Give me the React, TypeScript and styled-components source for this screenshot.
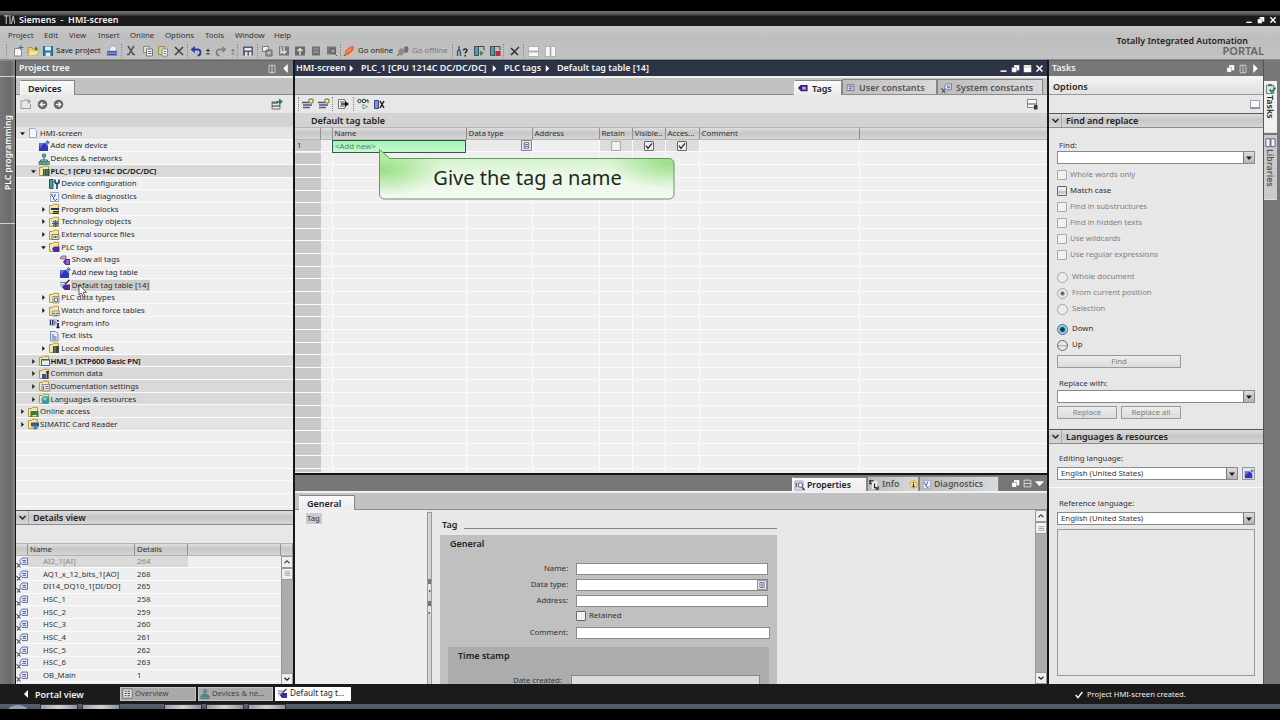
import React from "react";
import styled, { createGlobalStyle, css } from "styled-components";

const Global = createGlobalStyle`
  * { box-sizing: border-box; }
  body { margin: 0; background: #000; overflow: hidden; }
`;

const headGrad = "linear-gradient(#dedede, #c6c6c6 45%, #d6d6d6)";

const Screen = styled.div`
  width: 1280px; height: 720px; display: flex; flex-direction: column;
  font-family: "Noto Sans", "Open Sans", sans-serif; font-size: 7.8px; line-height: 1; color: #333;
  white-space: nowrap; background: #000; padding-top: 11px; overflow: hidden;
`;
const TitleBar = styled.div`
  height: 15px; flex: none; display: flex; align-items: center; padding: 2px 3px 0 4px;
  background: linear-gradient(#777 0, #4a4a4a 4px, #1c1c1c 5px, #1a1a1a); color: #f2f2f2;
  font-size: 9px; font-weight: 600; gap: 4px;
`;
const Grow = styled.div`flex: 1; min-width: 0;`;
const TopArea = styled.div`
  height: 34px; flex: none; display: flex; background: linear-gradient(#c9c9c9, #bfbfbf 30%, #c1c1c1);
  border-bottom: 1px solid #8c8c8c;
`;
const TopLeft = styled.div`flex: 1; display: flex; flex-direction: column;`;
const MenuBar = styled.div`height: 17px; display: flex; padding-top: 2px; padding-left: 8px;`;
const MenuItem = styled.div<{ $w: number }>`width: ${p => p.$w}px; height: 16px; display: flex; align-items: center;`;
const ToolRow = styled.div`height: 16px; display: flex; align-items: center; padding-left: 6px;`;
const Slot = styled.div<{ $w: number }>`width: ${p => p.$w}px; flex: none; height: 14px; display: flex; align-items: center; justify-content: center;`;
const SlotText = styled.div<{ $w: number; $dim?: boolean }>`
  width: ${p => p.$w}px; flex: none; padding-left: 1px; color: ${p => (p.$dim ? "#777" : "#222")};
`;
const Sep = styled.i`width: 1px; height: 14px; flex: none; border-left: 1px dotted #8a8a8a;`;
const Brand = styled.div`width: 180px; padding: 10px 16px 0 0; text-align: right; color: #1e1e1e; font-size: 8.9px; font-weight: 600;`;
const BrandLine = styled.div`padding-right: 16px; height: 9px; line-height: 9px;`;
const Portal = styled.div`color: #666; font-size: 11px; line-height: 11px; font-weight: 600;`;

const Body = styled.div`height: 624px; flex: none; display: flex; background: #15161e;`;
const LeftStrip = styled.div`
  width: 15px; display: flex; flex-direction: column; background: linear-gradient(90deg, #777, #6b6b6b 70%, #858585);
  margin-right: 1px;
`;
const StripTop = styled.div`height: 17px; border-bottom: 1px solid #d0d0d0; border-top: 1px solid #888;`;
const StripTab = styled.div`
  height: 147px; border-bottom: 1px solid #d0d0d0; display: flex; align-items: flex-end;
  writing-mode: vertical-rl; color: #fff;
`;
const Rotated = styled.span`transform: rotate(180deg); font-weight: 600; font-size: 8.5px; line-height: 15px; padding-top: 33px; height: 146px; width: 15px;`;

const Column = styled.div<{ $w: number; $mr?: number }>`
  width: ${p => p.$w}px; flex: none; display: flex; flex-direction: column; background: #efefef; position: relative;
  margin-right: ${p => p.$mr ?? 0}px; overflow: hidden;
`;
const PaneTitle = styled.div<{ $dark?: boolean }>`
  height: 16px; flex: none; display: flex; align-items: center; padding: 0 3px 0 ${p => (p.$dark ? 1 : 3)}px; color: #f4f4f4;
  font-size: 8.95px; font-weight: 600; background: ${p => (p.$dark ? "#2e3448" : "#777")}; border-top: 1px solid ${p => (p.$dark ? "#232839" : "#666")};
`;
const PaneIcons = styled.div<{ $gap: number }>`display: flex; align-items: center; gap: ${p => p.$gap}px;`;
const Crumb = styled.span<{ $w: number }>`width: ${p => p.$w}px; display: flex; align-items: center; justify-content: space-between; padding-right: 6px;`;
const TabBar = styled.div<{ $right?: boolean }>`
  height: 19px; flex: none; display: flex; align-items: flex-end; background: #c2c2c2; border-top: 2px solid #f0f0f0;
  border-bottom: 1px solid #8d8d8d; padding: 0 4px; justify-content: ${p => (p.$right ? "flex-end" : "flex-start")};
`;
const Tab = styled.div<{ $w: number; $active?: boolean; $tight?: boolean }>`
  width: ${p => p.$w}px; height: 15px; display: flex; align-items: center; gap: ${p => (p.$tight ? 2 : 4)}px; padding-left: ${p => (p.$tight ? 1 : 3)}px;
  font-size: ${p => (p.$tight ? 8.7 : 9)}px; font-weight: 600; color: ${p => (p.$active ? "#20202a" : "#555")};
  border: 1px solid #858585; border-bottom: 0;
  background: ${p => (p.$active ? "linear-gradient(#fafafa, #ebebeb)" : "linear-gradient(90deg, #bcbcbc, #dadada)")};
  ${p => p.$active && css`margin-bottom: -1px; border-left-color: #f8f8f8;`}
`;
const TabLabel = styled.span`padding-left: 4px;`;
const Toolbar = styled.div`height: 18px; flex: none; background: #e7e7e7; display: flex; align-items: center;`;
const Band = styled.div`height: 14px; flex: none; background: #d3d3d3; display: flex; align-items: center; font-size: 9px; font-weight: 600; color: #1c1c1c; padding-left: 16px;`;

const TreeArea = styled.div`height: 383px; flex: none; overflow: hidden; background: #efefef;`;
const TreeRow = styled.div<{ $tone: number; $depth: number }>`
  height: 12.66px; display: flex; align-items: center; padding: 1px 0 0 ${p => 1 + p.$depth * 10.6}px;
  border-bottom: 1px solid #fafafa; background: ${p => ["#efefef", "#e4e4e4", "#d9d9d9"][p.$tone]};
`;
const Caret = styled.span`width: 10px; height: 9px; padding-left: 1px; display: flex; flex: none; align-items: center; justify-content: center;`;
const TreeIcon = styled.span`width: 12px; height: 12px; flex: none; display: flex;`;
const TreeText = styled.span<{ $bold?: boolean; $sel?: boolean }>`
  height: 11px; line-height: 11px; font-weight: ${p => (p.$bold ? 600 : 400)}; color: ${p => (p.$bold ? "#111" : "#2d2d2d")};
  letter-spacing: ${p => (p.$bold ? "-0.15px" : "0")};
  background: ${p => (p.$sel ? "#ccc" : "transparent")}; padding: 0 1px;
`;
const SectionHead = styled.div`
  height: 15px; flex: none; display: flex; align-items: center; background: ${headGrad};
  border-top: 1px solid #555; border-bottom: 1px solid #8c8c8c; font-size: 9px; font-weight: 600; color: #222;
`;
const SectionToggle = styled.span`width: 13px; height: 13px; display: flex; align-items: center; justify-content: center; border-right: 1px solid #aaa; margin-right: 4px;`;
const Cells = styled.div`display: flex; flex: none;`;
const HeadCell = styled.div<{ $w: number }>`
  width: ${p => p.$w}px; height: 12.66px; flex: none; display: flex; align-items: center; padding: 1px 0 0 2px; overflow: hidden;
  border-right: 1px solid #909090; border-bottom: 1px solid #b5b5b5; border-top: 1px solid #b5b5b5; background: ${headGrad}; color: #333;
`;
const Cell = styled.div<{ $w: number; $bg?: string; $line?: boolean }>`
  width: ${p => p.$w}px; height: 12.66px; flex: none; display: flex; align-items: center; padding-top: 1px;
  background: ${p => p.$bg ?? "#efefef"}; border-bottom: 1px solid #fbfbfb; border-right: ${p => (p.$line ? "1px solid #fcfcfc" : "0")};
`;
const Centered = styled.span`flex: 1; display: flex; justify-content: center;`;
const Pushed = styled.span`flex: 1; display: flex; justify-content: flex-end;`;
const NameEdit = styled.div`
  width: 134px; height: 13px; flex: none; border: 1px solid #2f5a48; background: linear-gradient(#a8f0b4, #c4fbd0);
  display: flex; align-items: center; padding: 1px 0 0 2px; color: #4f8a68;
`;
const DetailsBody = styled.div`display: flex; height: 130px; flex: none;`;
const DetailText = styled.span<{ $pad: number; $dim?: boolean }>`padding-left: ${p => p.$pad}px; color: ${p => (p.$dim ? "#888" : "#333")};`;
const ScrollTrack = styled.div<{ $h: number }>`
  width: 12px; height: ${p => p.$h}px; flex: none; display: flex; flex-direction: column; background: #acacac; border-left: 1px solid #999;
`;
const ScrollBtn = styled.div`
  height: 12px; flex: none; background: #f0f0f0; border: 1px solid #999; border-left: 0; display: flex; align-items: center; justify-content: center;
`;

const TableArea = styled.div`height: 345px; flex: none; overflow: hidden; background: #efefef;`;
const Inspector = styled.div`height: 212px; flex: none; margin-top: 1px; display: flex; flex-direction: column; border-top: 2px solid #14141c;`;
const InspectorHead = styled.div`height: 16px; flex: none; background: #777; display: flex; align-items: flex-end; justify-content: flex-end; padding-right: 3px;`;
const InspectorTools = styled.div`display: flex; align-items: center; height: 15px; gap: 3px; padding-bottom: 1px;`;
const InspectorBody = styled.div`display: flex; height: 175px; background: #e7e7e7;`;
const NavPane = styled.div`width: 132px; background: #efefef; padding: 3px 0 0 11px;`;
const NavItem = styled.span`display: inline-block; background: #c8cbd0; line-height: 11px; padding: 0 2px 0 1px; color: #333;`;
const Splitter = styled.div`width: 5px; margin-top: 2px; background: #d4d4d4; border: 1px solid #999; border-bottom: 0; padding-top: 66px; display: flex; flex-direction: column; gap: 8px;`;
const Grip = styled.div`height: 14px; background: linear-gradient(#777 5px, #e5e5e5 5px); display: flex; align-items: flex-end; justify-content: center;`;
const Form = styled.div`flex: 1; padding: 6px 0 0 8px; height: 175px; overflow: hidden;`;
const FormHead = styled.div`height: 19px; width: 337px; display: flex; align-items: center; font-size: 9px; font-weight: 600; color: #222; padding: 0 0 2px 2px; gap: 7px;`;
const Rule = styled.i`flex: 1; height: 1px; background: #888; margin-top: 8px;`;
const Card = styled.div`width: 337px; height: 160px; background: #c0c0c0; padding-top: 3px;`;
const CardTitle = styled.div<{ $pad: number }>`height: 12px; line-height: 12px; padding-left: ${p => p.$pad}px; font-size: 9px; font-weight: 600; color: #222;`;
const FieldRow = styled.div<{ $mt?: number }>`height: 12px; margin-top: ${p => p.$mt ?? 4}px; display: flex; align-items: center;`;
const FieldLabel = styled.span<{ $w: number }>`width: ${p => p.$w}px; text-align: right; color: #333;`;
const Field = styled.span<{ $w: number; $ml: number; $bg?: string }>`
  width: ${p => p.$w}px; height: 12px; margin-left: ${p => p.$ml}px; background: ${p => p.$bg ?? "#fff"}; border: 1px solid #8a8a8a;
  display: flex; justify-content: flex-end;
`;
const SubCard = styled.div`width: 321px; margin: 8px 0 0 8px; background: #acacac; height: 60px; padding-top: 3px;`;

const OptionsHead = styled.div`
  height: 19px; flex: none; display: flex; align-items: center; padding: 2px 0 0 4px; font-size: 9px; font-weight: 600; color: #222;
  background: linear-gradient(#f4f4f4, #e0e0e0); border-bottom: 1px solid #9a9a9a;
`;
const TasksBody = styled.div`height: 301px; flex: none; background: #e7e7e7; padding: 12px 8px 0;`;
const LangBody = styled.div`flex: 1; background: #e7e7e7; padding: 9px 8px 0;`;
const Label = styled.div<{ $mb: number }>`height: 10px; line-height: 10px; padding-left: 2px; margin-bottom: ${p => p.$mb}px; color: #333;`;
const Combo = styled.div<{ $w?: number }>`
  width: ${p => p.$w ?? 198}px; height: 13px; border: 1px solid #8a8a8a; background: #fff; display: flex; align-items: center; justify-content: space-between;
  padding-left: 3px; color: #333;
`;
const ComboBtn = styled.span`width: 11px; height: 11px; background: linear-gradient(#ddd, #b4b4b4); border-left: 1px solid #777; display: flex; align-items: center; justify-content: center;`;
const Option = styled.div<{ $on?: boolean; $mt?: number; $gap: number }>`
  height: 16px; margin-top: ${p => p.$mt ?? 0}px; display: flex; align-items: center; gap: ${p => p.$gap}px; color: ${p => (p.$on ? "#2c2c2c" : "#808080")};
`;
const Box = styled.i<{ $on?: boolean; $light?: boolean }>`
  width: 10px; height: 10px; flex: none; border: 1px solid ${p => (p.$on || p.$light ? "#666" : "#a8a8a8")}; border-radius: 1px;
  background: ${p => (p.$on ? "linear-gradient(#eee 40%, #bbb 60%, #eee)" : "#f0f0f0")}; display: flex; align-items: center; justify-content: center;
`;
const Radio = styled.i<{ $kind: "dim" | "dimOn" | "on" | "off" }>`
  width: 11px; height: 11px; flex: none; border-radius: 50%;
  border: 1px solid ${p => (p.$kind === "on" ? "#2b6a8c" : p.$kind === "off" ? "#666" : "#a5a5a5")};
  background: ${p => ({
    dim: "#ececec",
    dimOn: "radial-gradient(circle, #6a6a6a 1.6px, #e8e8e8 2.4px)",
    on: "radial-gradient(circle, #123a55 1.8px, #5fb0d6 2.8px, #b6dcee 4px)",
    off: "linear-gradient(#e8e8e8 40%, #b5b5b5 50%, #e8e8e8 70%)",
  }[p.$kind])};
`;
const Row = styled.div<{ $gap: number; $mt: number }>`display: flex; gap: ${p => p.$gap}px; margin-top: ${p => p.$mt}px;`;
const Button = styled.div<{ $w: number }>`
  width: ${p => p.$w}px; height: 13px; border: 1px solid #999; background: linear-gradient(#ececec, #dcdcdc); display: flex; align-items: center; justify-content: center;
  color: #808080;
`;
const IconButton = styled.div`width: 13px; height: 13px; border: 1px solid #999; background: #e3e6ee; display: flex; align-items: center; justify-content: center;`;
const Divider = styled.i`display: block; height: 1px; background: #fbfbfb; margin: 7px -8px 10px;`;
const ListBox = styled.div`width: 198px; height: 147px; border: 1px solid #999; margin-top: 4px;`;

const RightStrip = styled.div`width: 17px; background: #777; padding: 21px 3px 0 0; display: flex; flex-direction: column; gap: 2px; border-left: 1px solid #555;`;
const SideTab = styled.div<{ $h: number; $active?: boolean }>`
  height: ${p => p.$h}px; width: 13px; background: ${p => (p.$active ? "#f0f0f0" : "#cacaca")}; display: flex; flex-direction: column; align-items: center; padding-top: 2px;
  gap: 1px; color: ${p => (p.$active ? "#222" : "#555")}; border-bottom: 1px solid #ddd;
`;
const VText = styled.span`writing-mode: vertical-rl; font-size: 8.9px; line-height: 11px; font-weight: 600;`;

const Footer = styled.div`height: 20px; flex: none; background: #1b1b1b; display: flex; align-items: center; color: #f0f0f0;`;
const PortalView = styled.div`width: 120px; padding-left: 22px; display: flex; align-items: center; gap: 5px; font-size: 9px; font-weight: 600;`;
const Task = styled.div<{ $active?: boolean; $w: number }>`
  width: ${p => p.$w}px; height: 14px; margin: 0 2px 1px 0; display: flex; align-items: center; gap: 2px; padding-left: 1px; font-size: ${p => (p.$active ? 8.2 : 7.7)}px;
  background: ${p => (p.$active ? "#fff" : "#a9a9a9")}; color: ${p => (p.$active ? "#1c1c1c" : "#444")}; border: 1px solid ${p => (p.$active ? "#fff" : "#c4c4c4")};
`;
const Status = styled.div`width: 205px; display: flex; align-items: center; gap: 4px; font-size: 7.6px; padding-top: 1px;`;
const OsBar = styled.div`height: 5px; flex: none; background: linear-gradient(#59616f, #4d5768); display: flex; padding-left: 8px; overflow: hidden;`;
const OsOrb = styled.i`width: 20px; height: 12px; border-radius: 50%; background: #8fa3b8; margin-top: 1px;`;
const OsBtn = styled.i<{ $ml: number }>`width: 38px; height: 6px; margin-left: ${p => p.$ml}px; background: linear-gradient(90deg, #99a0a8, #d2d4d4 50%, #8b929a); border: 1px solid #333;`;

const Callout = styled.div`position: absolute; left: 84px; top: 88px; width: 297px; height: 53px;`;
const CalloutText = styled.span`position: absolute; left: 0; right: 0; top: 20px; text-align: center; font-size: 20px; color: #1c2a1c; line-height: 20px;`;
const Pointer = styled.div`position: absolute; left: 62px; top: 224px;`;

const P = ({ d, f = "none", s = "none", w = 1 }: { d: string; f?: string; s?: string; w?: number }) => (
  <path d={d} fill={f} stroke={s} strokeWidth={w} />
);
const folder = <P d="M1.5 10.5V2.5h3l1-1.2h5v9.2z" f="#f4e8a6" s="#b8963c" />;
const spark = <P d="M9.5 0v5M7 2.5h5M8 1l3 3M11 1L8 4" s="#5b6a9a" w={0.8} />;
const art: Record<string, React.ReactNode> = {
  page: <P d="M2.5 1.5h5l2 2v7h-7z" f="#f7f9ff" s="#98a6c8" />,
  add: <><P d="M1 3h6l3 3v5H1z" f="#3038b8" /><P d="M1 3h5L2 8z" f="#6670dc" />{spark}</>,
  net: <><P d="M6 3v4M2.5 10V7h7v3M6 7v3" s="#2b6b6b" /><P d="M4.500 1h3v3h-3zM1 8.500h3v3H1zM4.600 8.500h3v3h-3zM8.300 8.500h3v3h-3z" f="#6fb0b0" s="#2b5f66" w={0.7} /></>,
  plc: <>{folder}<P d="M5 4h6.500v7H5z" f="#2e5548" /><P d="M6.500 4v7M9 4v7" s="#7fae8e" w={0.7} /></>,
  config: <><P d="M1.500 1.500h3.500v9H1.500z" f="#3f9f9f" s="#1f5a62" /><P d="M9 11V6M7 1.500v3l2 1.500 2-1.500v-3" s="#22406e" w={1.600} /></>,
  diag: <><P d="M2.500 1.500h8v9h-8z" f="#eef1fa" s="#9aa5c4" /><P d="M4 3v2l1.500 1.500L7 5V3M5.500 6.500V8l2 1.500L9 8" s="#3a4a7a" /></>,
  blocks: <>{folder}<P d="M3 5h8v2H3zM5 8h6v3H5z" f="#2a3348" /><P d="M4 9.500h7" s="#c6a13a" w={0.800} /></>,
  tech: <>{folder}<P d="M7.500 4v7M4 7.500h7M5 5l5 5M10 5l-5 5" s="#2d62a8" w={1.200} /></>,
  source: <>{folder}<P d="M4 5.500h7v5H4z" f="#e9e4cc" s="#6a6a5a" w={0.800} /><P d="M6 7v2M7.500 7v2M9 7v2" s="#333" w={0.800} /></>,
  tags: <>{folder}<P d="M4 8l2-2.500h5.500V11H6z" f="#4a2f9c" /></>,
  show: <><P d="M1 4l2-2h4v3H3z" f="#d8a8d0" s="#5b4a8a" w={0.800} /><P d="M4 8l2.500-3H11v6H6.500z" f="#5a2c94" /><P d="M7 7h3M7 9h3" s="#d8c8f0" w={0.800} /></>,
  table: <><P d="M1 2h8v7H1z" f="#dfe3ef" /><P d="M1 3.500h5M1 6h4" s="#7682a8" /><P d="M6 5l4.500-4" s="#222" w={1.300} /><P d="M3 8l2.500-2.500H11V11H5.500z" f="#4b2a94" /></>,
  types: <>{folder}<P d="M5 4.500h6v6.500H5z" f="#eee" s="#777" w={0.800} /><P d="M6.500 6h3v3.500h-3z" s="#555" w={0.800} /></>,
  watch: <>{folder}<P d="M4 6h7.500v5H4z" f="#ddd8c8" s="#888" w={0.700} /><P d="M4.500 8.500h2.500M8 8.500h3M6 10.500h4" s="#555" w={0.800} /></>,
  info: <><P d="M1 2h8v7H1z" f="#b9c1dd" /><P d="M2.500 3v5M4.500 3v5l2.500-2.500L4.500 3" s="#2c3870" /><P d="M10 3v1.500M10 6v5M8.500 10.500h3" s="#111" w={1.600} /></>,
  text: <><P d="M2.500 1.500h5l2.500 2v7.500H2.500z" f="#e9edfa" s="#7d89b4" /><P d="M4 5h2M4 7h4.500M4 9h4.500" s="#49568c" /></>,
  local: <>{folder}<P d="M5 4h6v7H5z" f="#3a4a42" /><P d="M7 4v7" s="#a9b0a0" w={0.700} /></>,
  hmi: <>{folder}<P d="M3.500 4.500h8v6h-8z" f="#e4f0f4" s="#4a6876" w={1} /><P d="M3.500 5h8" s="#3c5a66" w={1} /></>,
  common: <>{folder}<P d="M4 6h4v5H4z" f="#2e4cc0" /><P d="M9.500 3v8M8 4h3" s="#23305c" w={1.700} /></>,
  doc: <>{folder}<P d="M4 4.500h7.500v6.500H4z" f="#e2e2e2" s="#777" w={0.800} /><P d="M5.500 6v4M7.500 6.500h3M7.500 8.500h3" s="#555" w={0.800} /></>,
  globe: <>{folder}<circle cx="7.500" cy="7" r="4" fill="#2f9ac0" /><P d="M5 6c1-2 3-2 4-1L7 8z" f="#8fdcc8" /></>,
  online: <>{folder}<P d="M3.500 5h8v6h-2V9h-4v2h-2z" f="#3d7a44" /></>,
  card: <>{folder}<P d="M4 4.500h8v4H4z" f="#4a5668" /><P d="M6 7h4l-.5 4.500H7z" f="#2f86c4" /></>,
  tagx: <><P d="M4 4.500l2-2.500h5.500v6.500H6L4 6.500z" f="#dfe4f8" s="#6a74b0" w={1} /><P d="M6.500 4.500h3.500M6.500 6.300h3.500" s="#4a549c" w={0.900} /><P d="M.5 7l4 4.500M4.500 7.500l-3.500 4" s="#444" w={1.100} /></>,
  tag: <><P d="M0 6l3-3.500h8.500V10H3.500z" f="#3c1c80" /><P d="M5 4.500h4.500v3.500H5z" f="#b9a3e6" /></>,
  user: <><P d="M1.500 2.500h9v7.500h-9z" f="#cfd3e6" s="#5a608a" /><P d="M4 5h4.500M4 7.500h3.500" s="#353c74" /></>,
  newp: <><P d="M2.500 3.500h5l2 2v5.500h-7z" f="#f7f7f7" s="#888" /><P d="M9 0v5M6.500 2.500h5" s="#3b6f9a" /></>,
  open: <><P d="M1 10.500V2.500h4l1 1.500h4v6.500z" f="#e7cf6c" s="#a98a2c" w={0.800} /><P d="M3 6h8l-1.500 4.500h-8z" f="#f5e59a" /><P d="M8 1l3 3-3 2z" f="#3a8a3a" /></>,
  save: <><P d="M1 1h10v10H1z" f="#1f6f9f" /><P d="M3 1.500h6v4H3z" f="#d9eef6" /><P d="M3.500 7.500h5V11h-5z" f="#dfe7ea" /></>,
  print: <><P d="M5 1h5v5H3z" f="#eef" s="#99a" w={0.700} /><P d="M1 6h10v4.500H1z" f="#4456b0" /><P d="M1 8h10" s="#9aa8e0" /></>,
  cut: <P d="M3 1l5 8M9 1L4 9M2 9.500h2.500M7.500 9.500H10" s="#555" w={1.500} />,
  copy: <><P d="M1.500 1.500h6v6h-6z" f="#ddd" s="#888" /><P d="M4.500 4h6v7h-6z" f="#eee" s="#777" /><P d="M6 6.500h3.500M6 8.500h3.500" s="#777" /></>,
  paste: <><P d="M1.500 1.500h6v8h-6z" f="#d8cf9a" s="#998a50" /><P d="M5 4h5.500v7H5z" f="#f3f3f3" s="#888" /><P d="M6.500 6.500H9M6.500 8.500H9" s="#777" /></>,
  x: <P d="M2 2l8 8M10 2l-8 8" s="#444" w={1.600} />,
  undo: <><P d="M3 4.500h4.500a3 3 0 0 1 0 6" s="#2e3c9c" w={1.800} /><P d="M5 1v7L.5 4.500z" f="#2e3c9c" /></>,
  redo: <><P d="M9 4.500H4.500a3 3 0 0 0 0 6" s="#808080" w={1.800} /><P d="M7.500 1v7L11.500 4.500z" f="#808080" /></>,
  dd: <><P d="M6 2v5M3.500 4.500h5" s="#222" w={1.400} /><P d="M3.500 9.500h5" s="#222" w={1.500} /></>,
  ddDim: <><P d="M6 2v5M3.500 4.500h5" s="#777" w={1.400} /><P d="M3.500 9.500h5" s="#777" w={1.500} /></>,
  find: <><P d="M1 1.500h10v9H1z" f="#555d70" /><P d="M2.500 3h7v2.500h-7z" f="#e6e6ee" /><P d="M3 7h2.500v4H3zM7 7h2.500v4H7z" f="#dcdfea" /></>,
  g1: <><P d="M1.500 1.500h6v5h-6z" f="#eee" s="#777" /><P d="M5 5h6v6H5z" f="#999" s="#666" /><P d="M6.500 8h3" s="#eee" /></>,
  g2: <><P d="M1 1.500h10v9H1z" f="#777" /><P d="M6 2v6M3.500 6L6 8.500 8.500 6M3 2v7" s="#eee" w={1.200} /></>,
  g3: <><P d="M1 1.500h10v9H1z" f="#6a6a6a" /><P d="M6 10V4M3.500 6L6 3.500 8.500 6" s="#eee" w={1.200} /></>,
  g4: <><P d="M2 1.500h8v9H2z" f="#707070" /><P d="M3.500 4h5M3.500 7h5" s="#aaa" /></>,
  g5: <><P d="M1 1.500h9v8H1z" f="#777" /><P d="M5 4h4v4H5zM8 8l3 3" f="#aaa" s="#555" /></>,
  plug: <><P d="M1 11l3-3" s="#b04818" w={1.500} /><P d="M2 6l5-4.500 4-.5-.5 4-5 5-3 .5z" f="#ee6a2c" /><P d="M4 7l4-3.500" s="#ffc29a" /></>,
  unplug: <><P d="M0 11l3-3" s="#777" w={1.500} /><P d="M1.500 5l3-2 3 2v3l-3 2.500-3-.5z" f="#8a8a8a" /><P d="M7 2.500l3-1.500 1.500 2-.5 4-3 1z" f="#6e6e6e" /></>,
  nodes: <><P d="M3 1v3M1.500 11V7L3 4l1.500 3v4" s="#355d74" w={1.500} /><P d="M7.500 5.500c0-2 3.500-2 3.500 0 0 1.500-1.800 1.200-1.800 3M9.200 10v1.500" s="#222" w={1.400} /></>,
  run: <><P d="M1.500 1.500h4v9h-4z" f="#5d9aa8" s="#2e5460" /><P d="M5.500 1.500H11v4" s="#444" /><P d="M7 5.500l4 2.500-4 3z" f="#3f8f4f" /></>,
  stop: <><P d="M1.500 1.500h4v9h-4z" f="#5d9aa8" s="#2e5460" /><P d="M5.500 1.500H11v4" s="#444" /><P d="M6.500 6h5v5h-5z" f="#c2263a" /></>,
  cross: <><P d="M1 9h5V4" s="#999" /><P d="M3 3l7 7M11 2L3 10" s="#333" w={1.500} /></>,
  splitH: <P d="M.500.500h11v5H.500zM.500 6.500h11v5H.500z" f="#f8f8f8" s="#999" w={0.700} />,
  splitV: <P d="M.500.500h5v11h-5zM6.500.500h5v11h-5z" f="#f8f8f8" s="#999" w={0.700} />,
  row: <><P d="M0 4.500h7M1 7h9M1 9.500h7" s="#4c5580" w={1.300} /><circle cx="9" cy="3" r="2.200" fill="none" stroke="#7c8c28" strokeWidth="1.200" /></>,
  exp: <><P d="M1.500 1.500h6.500v9H1.500z" f="#eee" s="#777" /><P d="M3 4h4M3 8h4" s="#555" /><P d="M4 6h5" s="#111" w={1.300} /><P d="M8 3l4 3-4 3z" f="#111" /></>,
  glasses: <><circle cx="2.500" cy="3" r="1.700" fill="none" stroke="#333" /><circle cx="7" cy="3" r="1.700" fill="none" stroke="#333" /><P d="M8.500 2.500L11 2v3" s="#333" /><P d="M6 6.500l4.500 2.200L6 11z" f="#dfffe0" s="#3c9a4a" w={0.800} /></>,
  bars: <><P d="M1.500 2.500h4v8h-4z" f="#8a93d0" s="#39427c" /><P d="M7 3l4 7M11 3l-4 7" s="#222" w={1.500} /></>,
  layout: <><P d="M1.500 1.500h9v8h-9z" f="#f6f6f6" s="#888" /><P d="M1.500 6h9" s="#555" /><P d="M8 7h3.500v4.500H8z" f="#2a3650" /></>,
  back: <><circle cx="6" cy="6" r="5.200" fill="#666" /><P d="M9 6H4M6 3.500L3.500 6 6 8.500" s="#f2f2f2" w={1.400} /></>,
  fwd: <><circle cx="6" cy="6" r="5.200" fill="#666" /><P d="M3 6h5M6 3.500L8.500 6 6 8.500" s="#f2f2f2" w={1.400} /></>,
  star: <><P d="M1 10.500V3h3l1-1h3M10.500 6v4.500H1" s="#999" /><P d="M9 1v5M7 3.500h4" s="#999" /></>,
  sheet: <><P d="M1 4h8v7H1z" f="#e8e8e8" s="#555" w={0.800} /><P d="M1 5h6M1 8h8" s="#333" w={1.200} /><P d="M5 3h3V.500L12 3.500 8 7V4.500H5z" f="#2f7a62" /></>,
  window: <><P d="M1.500 2.500h9v7.500h-9z" f="#f8f9ff" s="#9aa0b4" /><P d="M1 10h10" s="#5a6078" /></>,
  prop: <><P d="M1 1h9v10H1z" f="#d8dcec" s="#888eaa" w={0.700} /><P d="M2.500 3v5M4 4h1" s="#444" /><circle cx="7" cy="5.500" r="2.500" fill="#eef" stroke="#4c5478" /><P d="M9 8l2.500 3" s="#333" w={1.500} /></>,
  infot: <><P d="M3 2h6v9H3z" f="#eceef6" /><P d="M1 1v4h2M1 2h4M6 5v4.500h2.500M10 8v3H7" s="#222" w={1.300} /></>,
  bulb: <><circle cx="6" cy="6" r="5" fill="#f0dc8c" stroke="#c0a850" /><P d="M6 2.500v1.500M6 5v4M4.500 9h3" s="#222" w={1.400} /></>,
  overview: <><P d="M1 1h10v10H1z" f="#eee" s="#555" w={0.800} /><P d="M3 3.500h2M6 3.500h3M3 6h2M6 6h3M3 8.500h2M6 8.500h3" s="#333" w={1.200} /></>,
  min: <P d="M2 9.500h8" s="#fff" w={2} />,
  rest: <><P d="M4 1.500h7v7H4z" f="#fff" /><P d="M1 4.500h6.500V11H1z" f="#fff" s="#555" w={0.600} /></>,
  max: <><P d="M1 1.500h10v9.500H1z" f="#fff" /><P d="M1 4h10" s="#888" w={0.700} /></>,
  close: <P d="M2 2l8 8M10 2l-8 8" s="#fff" w={2} />,
  pin: <P d="M2.500 1.500h7v9h-7zM6 1.500v9" s="#ddd" />,
  split: <P d="M1.500 1.500h9v9h-9zM1.500 6h9" s="#ddd" w={1.200} />,
  left: <P d="M9 0v12L3 6z" f="#fff" />,
  right: <P d="M3 0v12l6-6z" f="#fff" />,
  gripL: <P d="M9 0v12L3 6z" f="#222" />,
  gripR: <P d="M3 0v12l6-6z" f="#222" />,
  down: <P d="M0 3h12L6 9.500z" f="#fff" />,
  tick: <P d="M1 6l3.500 4L11 1.500" s="#fff" w={2} />,
  check: <P d="M1.500 5.500l3 4L10.500 2" s="#333" w={2.200} />,
  open1: <P d="M0 3h12L6 10z" f="#1c1c1c" />,
  shut1: <P d="M3 0l6.500 6L3 12z" f="#1c1c1c" />,
  chev: <P d="M1 3.500l5 5 5-5" s="#222" w={2.400} />,
  chevUp: <P d="M1 8.500l5-5 5 5" s="#444" w={2.200} />,
  lines: <P d="M1 3h10M1 6h10M1 9h10" s="#777" />,
  tia: <><P d="M0 2h5M2.500 2v9M6.500 1v10M8 11l2-9 2 9" s="#bbb" w={1.200} /></>,
  clip: <><P d="M1.500 2.500h8v9h-8z" f="#dfe7e2" s="#667" /><P d="M3.500 1h4v2.500h-4z" f="#667" /><P d="M5 7l2.500 3L11.500 5" s="#1f8a3a" w={2} /></>,
  book: <P d="M1 2h4.500v8.500H1zM6.500 2H11v8.500H6.500z" f="#f4f6ff" s="#4e5a8a" />,
  picker: <><P d="M.5.5h11v11H.5z" f="#e4e7f2" s="#777" /><P d="M3.500 3h5v6h-5z" f="#fff" s="#555e8c" /><P d="M4.500 5h3M4.500 7h3" s="#39427c" /></>,
};
const Icon = ({ n, s = 12 }: { n: string; s?: number }) => (
  <svg width={s} height={s} viewBox="0 0 12 12">{art[n]}</svg>
);

type TNode = [string, number, string, string?, number?];
const tree: TNode[] = [
  ["HMI-screen", 0, "page", "o", 1], ["Add new device", 1, "add"], ["Devices & networks", 1, "net"],
  ["PLC_1 [CPU 1214C DC/DC/DC]", 1, "plc", "o", 2], ["Device configuration", 2, "config"], ["Online & diagnostics", 2, "diag"],
  ["Program blocks", 2, "blocks", "c"], ["Technology objects", 2, "tech", "c"], ["External source files", 2, "source", "c"],
  ["PLC tags", 2, "tags", "o"], ["Show all tags", 3, "show"], ["Add new tag table", 3, "add"], ["Default tag table [14]", 3, "table"],
  ["PLC data types", 2, "types", "c"], ["Watch and force tables", 2, "watch", "c"], ["Program info", 2, "info"], ["Text lists", 2, "text"],
  ["Local modules", 2, "local", "c"], ["HMI_1 [KTP600 Basic PN]", 1, "hmi", "c", 2], ["Common data", 1, "common", "c", 2],
  ["Documentation settings", 1, "doc", "c", 2], ["Languages & resources", 1, "globe", "c", 2], ["Online access", 0, "online", "c", 1],
  ["SIMATIC Card Reader", 0, "card", "c", 1],
];
const details = [["AI2_1[AI]", "264"], ["AQ1_x_12_bits_1[AO]", "268"], ["DI14_DQ10_1[DI/DO]", "265"], ["HSC_1", "258"], ["HSC_2", "259"],
  ["HSC_3", "260"], ["HSC_4", "261"], ["HSC_5", "262"], ["HSC_6", "263"], ["OB_Main", "1"]];
const menus: [string, number][] = [["Project", 36], ["Edit", 25], ["View", 29], ["Insert", 32], ["Online", 35], ["Options", 40], ["Tools", 30], ["Window", 39], ["Help", 30]];
const tools: [string, number][] = [["|", 1], ["", 3], ["newp", 16], ["open", 14], ["save", 15], ["=Save project", 47], ["print", 19], ["|", 1],
  ["cut", 18], ["copy", 15], ["paste", 16], ["x", 16], ["|", 1], ["undo", 16], ["dd", 8], ["redo", 17], ["ddDim", 8], ["|", 1], ["find", 19], ["|", 1],
  ["g1", 18], ["g2", 16], ["g3", 16], ["g4", 15], ["g5", 17], ["|", 1], ["plug", 16], ["=Go online", 38], ["unplug", 16], ["~Go offline", 41], ["|", 1],
  ["nodes", 18], ["run", 16], ["stop", 16], ["|", 1], ["cross", 19], ["|", 1], ["splitH", 18], ["splitV", 16]];
const columns: [string, number][] = [["", 25.500], ["", 12], ["Name", 134], ["Data type", 66], ["Address", 67], ["Retain", 33], ["Visible..", 33], ["Acces...", 34], ["Comment", 160], ["", 190]];

const Tools = ({ items }: { items: [string, number][] }) => (
  <>{items.map(([k, w], i) =>
    k === "|" ? <Sep key={i} /> : k[0] === "=" || k[0] === "~" ? <SlotText key={i} $w={w} $dim={k[0] === "~"}>{k.slice(1)}</SlotText>
      : <Slot key={i} $w={w}>{k && <Icon n={k} s={k.startsWith("dd") ? 9 : k.startsWith("split") ? 11 : 12} />}</Slot>)}</>
);

const ComboBox = ({ w, text }: { w?: number; text?: string }) => (
  <Combo $w={w}><span>{text}</span><ComboBtn><Icon n="open1" s={6} /></ComboBtn></Combo>
);

const ScrollBar = ({ h }: { h: number }) => (
  <ScrollTrack $h={h}><ScrollBtn><Icon n="chevUp" s={6} /></ScrollBtn><ScrollBtn><Icon n="lines" s={7} /></ScrollBtn><Grow /><ScrollBtn><Icon n="chev" s={6} /></ScrollBtn></ScrollTrack>
);

const ProjectTree = () => (
  <Column $w={277} $mr={2}>
    <PaneTitle>Project tree<Grow /><PaneIcons $gap={4}><Icon n="pin" s={10} /><Icon n="left" s={9} /></PaneIcons></PaneTitle>
    <TabBar><Tab $w={55} $active><TabLabel>Devices</TabLabel></Tab></TabBar>
    <Toolbar><Slot $w={20}><Icon n="star" /></Slot><Slot $w={12}><Icon n="back" s={11} /></Slot><Slot $w={20}><Icon n="fwd" s={11} /></Slot><Grow /><Slot $w={32}><Icon n="sheet" /></Slot></Toolbar>
    <Band />
    <TreeArea>
      {tree.map(([t, d, ic, c, tone], i) => (
        <TreeRow key={i} $depth={d} $tone={tone ?? 0}>
          <Caret>{c && <Icon n={c === "o" ? "open1" : "shut1"} s={5} />}</Caret>
          <TreeIcon><Icon n={ic} s={12} /></TreeIcon>
          <TreeText $bold={/^(PLC_1|HMI_1)/.test(t)} $sel={t.startsWith("Default")}>{t}</TreeText>
        </TreeRow>
      ))}
      {Array.from({ length: 8 }, (_, i) => <TreeRow key={i} $depth={0} $tone={0} />)}
    </TreeArea>
    <SectionHead><SectionToggle><Icon n="chev" s={7} /></SectionToggle>Details view</SectionHead>
    <Toolbar />
    <Cells>{([["", 12], ["Name", 107], ["Details", 53], ["", 93], ["", 12]] as [string, number][]).map(([t, w], i) => <HeadCell key={i} $w={w}>{t}</HeadCell>)}</Cells>
    <DetailsBody>
      <div>
        {details.map(([a, b], i) => (
          <Cells key={a}>
            <Cell $w={12}><Icon n="tagx" s={12} /></Cell>
            <Cell $w={107} $bg={i ? undefined : "#d9d9d9"}><DetailText $pad={15} $dim={!i}>{a}</DetailText></Cell>
            <Cell $w={53} $bg={i ? undefined : "#d9d9d9"}><DetailText $pad={2} $dim={!i}>{b}</DetailText></Cell>
            <Cell $w={93} />
          </Cells>
        ))}
      </div>
      <ScrollBar h={129} />
    </DetailsBody>
    <Pointer><svg width="10" height="15" viewBox="0 0 10 15"><path d="M1 1v10l2.400-2 1.800 4 1.800-.8-1.800-3.900H8.500z" fill="#fff" stroke="#333" strokeWidth=".8" /></svg></Pointer>
  </Column>
);

const TagEditor = () => (
  <Column $w={752} $mr={2}>
    <PaneTitle $dark>
      <Crumb $w={65}>HMI-screen<Icon n="right" s={7} /></Crumb><Crumb $w={143}>PLC_1 [CPU 1214C DC/DC/DC]<Icon n="right" s={7} /></Crumb>
      <Crumb $w={53}>PLC tags<Icon n="right" s={7} /></Crumb>Default tag table [14]
      <Grow /><PaneIcons $gap={3}><Icon n="min" s={9} /><Icon n="rest" s={9} /><Icon n="max" s={9} /><Icon n="close" s={9} /></PaneIcons>
    </PaneTitle>
    <TabBar $right>
      <Tab $w={48} $active><Icon n="tag" s={10} />Tags</Tab><Tab $w={95}><Icon n="user" s={9} />User constants</Tab><Tab $w={106}><Icon n="tagx" s={11} />System constants</Tab>
    </TabBar>
    <Toolbar><Slot $w={3} /><Sep /><Tools items={[["row", 17], ["row", 16], ["|", 1], ["exp", 20], ["|", 1], ["glasses", 18], ["bars", 14]]} /><Grow /><Slot $w={30}><Icon n="layout" s={12} /></Slot></Toolbar>
    <Band>Default tag table</Band>
    <TableArea>
      <Cells>{columns.map(([t, w], i) => <HeadCell key={i} $w={w}>{t}</HeadCell>)}</Cells>
      <Cells>
        <Cell $w={25.500} $bg="#c8c8c8"><DetailText $pad={2}>1</DetailText></Cell><Cell $w={11.500} $line />
        <NameEdit>&lt;Add new&gt;</NameEdit>
        <Cell $w={66.500} $line $bg="#e9e9e9"><Pushed><Icon n="picker" s={11} /></Pushed></Cell><Cell $w={67} $line />
        <Cell $w={33} $line $bg="#dcdcdc"><Centered><Box /></Centered></Cell>
        {[33, 34].map(w => <Cell key={w} $w={w} $line $bg="#dcdcdc"><Centered><Box $light><Icon n="check" s={8} /></Box></Centered></Cell>)}
        <Cell $w={160} $line /><Cell $w={190} />
      </Cells>
      {Array.from({ length: 26 }, (_, r) => (
        <Cells key={r}>{columns.map(([, w], i) => <Cell key={i} $w={w} $line={i > 0} $bg={i ? undefined : "#c8c8c8"} />)}</Cells>
      ))}
    </TableArea>
    <Inspector>
      <InspectorHead>
        <Tab $w={75} $active $tight><Icon n="prop" s={11} />Properties</Tab><Tab $w={52} $tight><Icon n="infot" s={11} />Info<Grow /><Icon n="bulb" s={9} /></Tab>
        <Tab $w={80} $tight><Icon n="diag" s={11} />Diagnostics</Tab><Slot $w={12} /><InspectorTools><Icon n="rest" s={9} /><Icon n="split" s={9} /><Icon n="down" s={9} /></InspectorTools>
      </InspectorHead>
      <TabBar><Tab $w={56} $active><TabLabel>General</TabLabel></Tab></TabBar>
      <InspectorBody>
        <NavPane><NavItem>Tag</NavItem></NavPane>
        <Splitter><Grip><Icon n="gripL" s={4} /></Grip><Grip><Icon n="gripR" s={4} /></Grip></Splitter>
        <Form>
          <FormHead>Tag<Rule /></FormHead>
          <Card>
            <CardTitle $pad={10}>General</CardTitle>
            <FieldRow $mt={13}><FieldLabel $w={128}>Name:</FieldLabel><Field $w={192} $ml={8} /></FieldRow>
            <FieldRow><FieldLabel $w={128}>Data type:</FieldLabel><Field $w={192} $ml={8}><Icon n="picker" s={10} /></Field></FieldRow>
            <FieldRow><FieldLabel $w={128}>Address:</FieldLabel><Field $w={192} $ml={8} /></FieldRow>
            <FieldRow $mt={3}><FieldLabel $w={136} /><Box $light /><DetailText $pad={3}>Retained</DetailText></FieldRow>
            <FieldRow $mt={5}><FieldLabel $w={128}>Comment:</FieldLabel><Field $w={194} $ml={8} /></FieldRow>
            <SubCard>
              <CardTitle $pad={10}>Time stamp</CardTitle>
              <FieldRow $mt={13}><FieldLabel $w={114}>Date created:</FieldLabel><Field $w={189} $ml={9} $bg="#dcdcdc" /></FieldRow>
            </SubCard>
          </Card>
        </Form>
        <ScrollBar h={174} />
      </InspectorBody>
    </Inspector>
    <Callout>
      <svg width="297" height="53" viewBox="0 0 297 53">
        <defs>
          <linearGradient id="cg" x1="0" y1="0" x2="0" y2="1"><stop offset="0" stopColor="#c4eebb" /><stop offset=".5" stopColor="#eaf8e6" /><stop offset="1" stopColor="#f4f8f2" /></linearGradient>
          <radialGradient id="cc"><stop offset="0" stopColor="#9ce088" /><stop offset="1" stopColor="#9ce088" stopOpacity="0" /></radialGradient>
          <clipPath id="cp"><path d="M.5 1.500L11 10.500H290a5 5 0 0 1 5 5V46a5 5 0 0 1-5 5H5.500a5 5 0 0 1-5-5z" /></clipPath>
        </defs>
        <g clipPath="url(#cp)">
          <rect width="297" height="53" fill="url(#cg)" /><ellipse cx="290" cy="15" rx="60" ry="26" fill="url(#cc)" /><ellipse cx="5" cy="22" rx="60" ry="26" fill="url(#cc)" />
        </g>
        <path d="M.5 1.500L11 10.500H290a5 5 0 0 1 5 5V46a5 5 0 0 1-5 5H5.500a5 5 0 0 1-5-5z" fill="none" stroke="#5f9a5c" />
      </svg>
      <CalloutText>Give the tag a name</CalloutText>
    </Callout>
  </Column>
);

const checks: [string, boolean][] = [["Whole words only", false], ["Match case", true], ["Find in substructures", false], ["Find in hidden texts", false], ["Use wildcards", false], ["Use regular expressions", false]];

const Tasks = () => (
  <Column $w={214}>
    <PaneTitle>Tasks<Grow /><PaneIcons $gap={3}><Icon n="rest" s={9} /><Icon n="pin" s={10} /><Icon n="right" s={9} /></PaneIcons></PaneTitle>
    <OptionsHead>Options</OptionsHead>
    <Toolbar><Grow /><Slot $w={17}><Icon n="window" s={12} /></Slot></Toolbar>
    <SectionHead><SectionToggle><Icon n="chev" s={7} /></SectionToggle>Find and replace</SectionHead>
    <TasksBody>
      <Label $mb={1}>Find:</Label>
      <ComboBox />
      <Row $gap={0} $mt={3} />
      {checks.map(([t, on]) => <Option key={t} $on={on} $gap={3}><Box $on={on} />{t}</Option>)}
      <Option $mt={6} $gap={4}><Radio $kind="dim" />Whole document</Option>
      <Option $gap={4}><Radio $kind="dimOn" />From current position</Option>
      <Option $gap={4}><Radio $kind="dim" />Selection</Option>
      <Option $mt={4} $gap={4} $on><Radio $kind="on" />Down</Option>
      <Option $gap={4} $on><Radio $kind="off" />Up</Option>
      <Row $gap={0} $mt={2}><Button $w={124}>Find</Button></Row>
      <Row $gap={0} $mt={10} />
      <Label $mb={2}>Replace with:</Label>
      <ComboBox />
      <Row $gap={4} $mt={3}><Button $w={60}>Replace</Button><Button $w={60}>Replace all</Button></Row>
    </TasksBody>
    <SectionHead><SectionToggle><Icon n="chev" s={7} /></SectionToggle>Languages &amp; resources</SectionHead>
    <LangBody>
      <Label $mb={4}>Editing language:</Label>
      <Row $gap={4} $mt={0}><ComboBox w={181} text="English (United States)" /><IconButton><Icon n="add" s={10} /></IconButton></Row>
      <Divider />
      <Label $mb={4}>Reference language:</Label>
      <ComboBox text="English (United States)" />
      <ListBox />
    </LangBody>
  </Column>
);

export default function App() {
  return (
    <Screen>
      <Global />
      <TitleBar><Icon n="tia" s={11} />Siemens &nbsp;- &nbsp;HMI-screen<Grow /><Icon n="min" s={8} /><Icon n="rest" s={8} /><Icon n="close" s={8} /></TitleBar>
      <TopArea>
        <TopLeft>
          <MenuBar>{menus.map(([t, w]) => <MenuItem key={t} $w={w}>{t}</MenuItem>)}</MenuBar>
          <ToolRow><Tools items={tools} /></ToolRow>
        </TopLeft>
        <Brand><BrandLine>Totally Integrated Automation</BrandLine><Portal>PORTAL</Portal></Brand>
      </TopArea>
      <Body>
        <LeftStrip><StripTop /><StripTab><Rotated>PLC programming</Rotated></StripTab></LeftStrip>
        <ProjectTree />
        <TagEditor />
        <Tasks />
        <RightStrip>
          <SideTab $h={52} $active><Icon n="clip" s={11} /><VText>Tasks</VText></SideTab>
          <SideTab $h={65}><Icon n="book" s={11} /><VText>Libraries</VText></SideTab>
        </RightStrip>
      </Body>
      <Footer>
        <PortalView><Icon n="left" s={8} />Portal view</PortalView>
        <Task $w={76}><Icon n="overview" s={11} />Overview</Task><Task $w={75}><Icon n="net" s={10} />Devices &amp; ne...</Task><Task $w={76} $active><Icon n="table" s={11} />Default tag t...</Task>
        <Grow /><Status><Icon n="tick" s={8} />Project HMI-screen created.</Status>
      </Footer>
      <OsBar><OsOrb /><OsBtn $ml={12} /><OsBtn $ml={4} /><OsBtn $ml={44} /><OsBtn $ml={4} /><OsBtn $ml={4} /></OsBar>
    </Screen>
  );
}
